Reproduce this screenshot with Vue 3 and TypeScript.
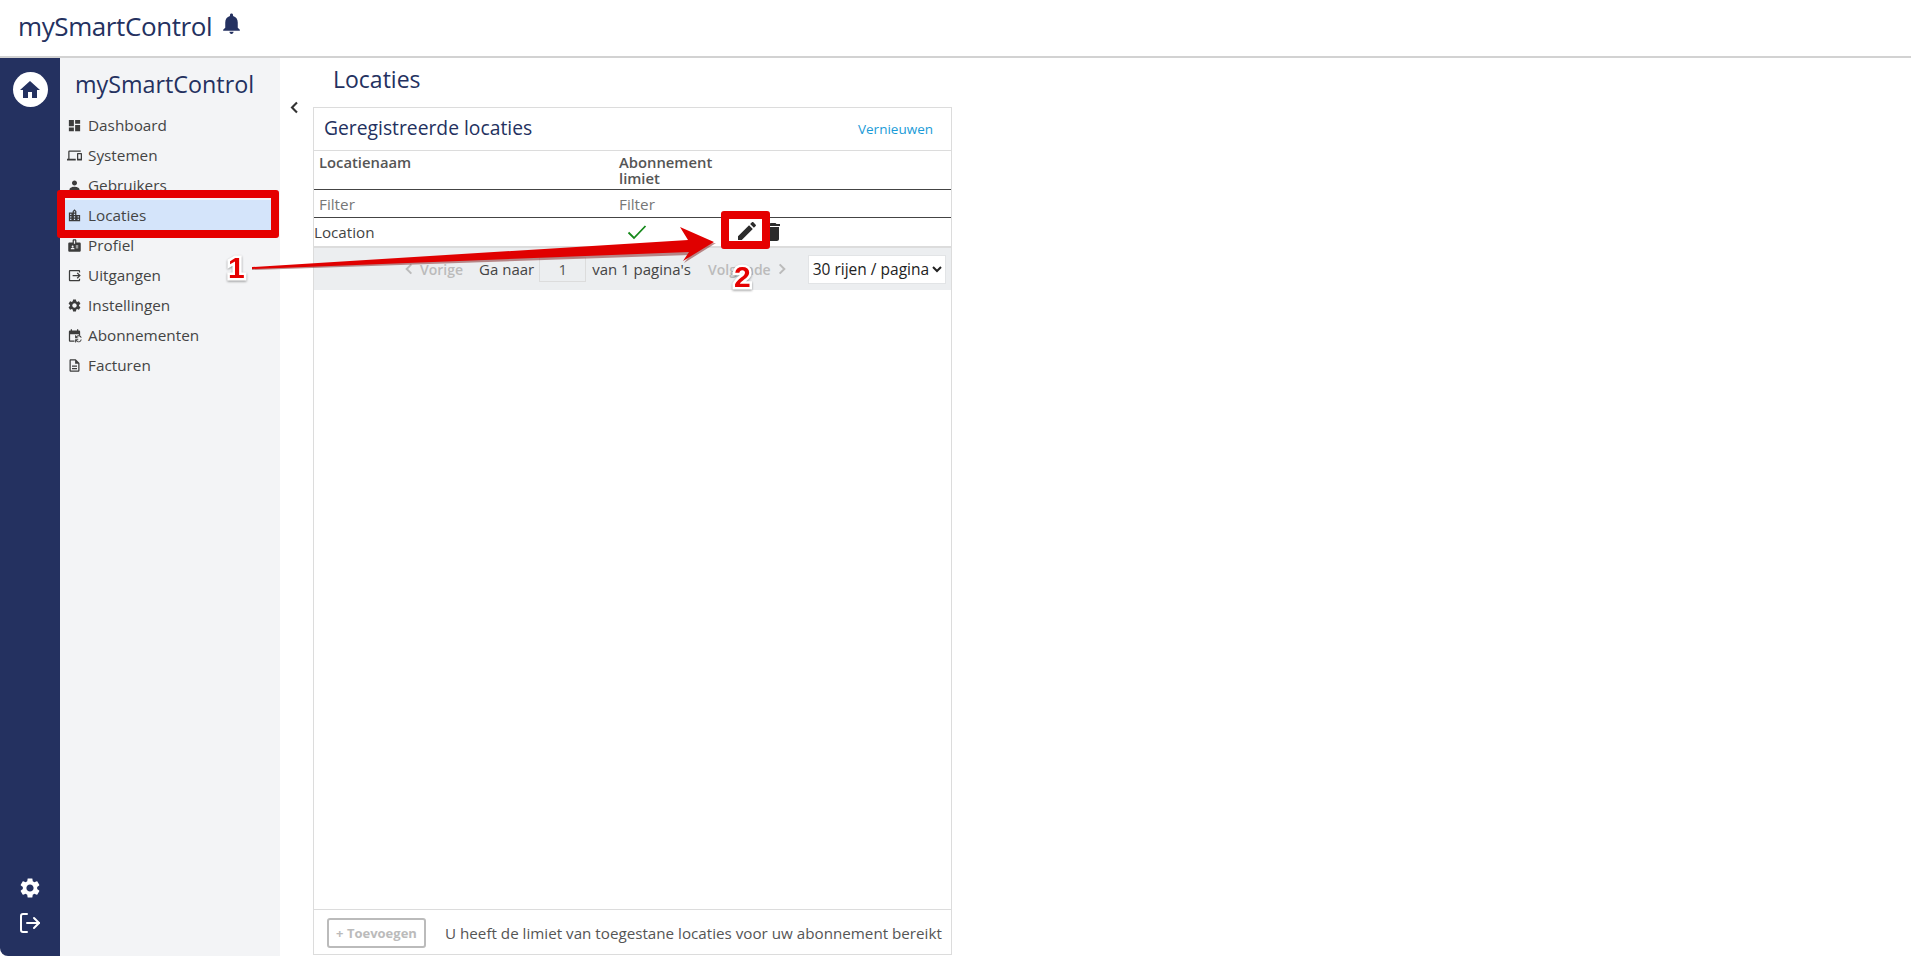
<script setup lang="ts">
interface NavItem {
    label: string
    icon: string
    active?: boolean
}

const navItems: NavItem[] = [
    { label: 'Dashboard', icon: 'M3 13h8V3H3v10zm0 8h8v-6H3v6zm10 0h8V11h-8v10zm0-18v6h8V3h-8z' },
    { label: 'Systemen', icon: 'M4 6h18V4H4c-1.1 0-2 .9-2 2v11H0v3h14v-3H4V6zm19 2h-6c-.55 0-1 .45-1 1v10c0 .55.45 1 1 1h6c.55 0 1-.45 1-1V9c0-.55-.45-1-1-1zm-1 9h-4v-7h4v7z' },
    { label: 'Gebruikers', icon: 'M12 12c2.21 0 4-1.79 4-4s-1.79-4-4-4-4 1.79-4 4 1.79 4 4 4zm0 2c-2.67 0-8 1.34-8 4v2h16v-2c0-2.66-5.33-4-8-4z' },
    { label: 'Locaties', active: true, icon: 'M15 11V5l-3-3-3 3v2H3v14h18V11h-6zm-8 8H5v-2h2v2zm0-4H5v-2h2v2zm0-4H5V9h2v2zm6 8h-2v-2h2v2zm0-4h-2v-2h2v2zm0-4h-2V9h2v2zm0-4h-2V5h2v2zm6 12h-2v-2h2v2zm0-4h-2v-2h2v2z' },
    { label: 'Profiel', icon: 'M20 7h-5V4c0-1.1-.9-2-2-2h-2c-1.1 0-2 .9-2 2v3H4c-1.1 0-2 .9-2 2v11c0 1.1.9 2 2 2h16c1.1 0 2-.9 2-2V9c0-1.1-.9-2-2-2zM9 12c.83 0 1.5.67 1.5 1.5S9.83 15 9 15s-1.5-.67-1.5-1.5S8.17 12 9 12zm3 6H6v-.75c0-1 2-1.5 3-1.5s3 .5 3 1.5V18zm1-9h-2V4h2v5zm5 7.5h-4V15h4v1.5zm0-3h-4V12h4v1.5z' },
    { label: 'Uitgangen', icon: 'M17 17l5-5-5-5-1.41 1.41L18.17 11H9v2h9.17l-2.58 2.59zM19 19H5V5h14v2h2V5c0-1.1-.9-2-2-2H5c-1.1 0-2 .9-2 2v14c0 1.1.9 2 2 2h14c1.1 0 2-.9 2-2v-2h-2v2z' },
    { label: 'Instellingen', icon: 'M19.14 12.94c.04-.3.06-.61.06-.94 0-.32-.02-.64-.07-.94l2.03-1.58c.18-.14.23-.41.12-.61l-1.92-3.32c-.12-.22-.37-.29-.59-.22l-2.39.96c-.5-.38-1.03-.7-1.62-.94l-.36-2.54c-.04-.24-.24-.41-.48-.41h-3.84c-.24 0-.43.17-.47.41l-.36 2.54c-.59.24-1.13.57-1.62.94l-2.39-.96c-.22-.08-.47 0-.59.22L2.74 8.87c-.12.21-.08.47.12.61l2.03 1.58c-.05.3-.09.63-.09.94s.02.64.07.94l-2.03 1.58c-.18.14-.23.41-.12.61l1.92 3.32c.12.22.37.29.59.22l2.39-.96c.5.38 1.03.7 1.62.94l.36 2.54c.05.24.24.41.48.41h3.84c.24 0 .44-.17.47-.41l.36-2.54c.59-.24 1.13-.56 1.62-.94l2.39.96c.22.08.47 0 .59-.22l1.92-3.32c.12-.22.07-.47-.12-.61l-2.01-1.58zM12 15.6c-1.98 0-3.6-1.62-3.6-3.6s1.62-3.6 3.6-3.6 3.6 1.62 3.6 3.6-1.62 3.6-3.6 3.6z' },
    { label: 'Abonnementen', icon: 'M21 12V6c0-1.1-.9-2-2-2h-1V2h-2v2H8V2H6v2H5c-1.1 0-2 .9-2 2v14c0 1.1.9 2 2 2h7v-2H5V10h14v2h2zm-5.36 8a3.5 3.5 0 0 0 6.36-1.5h1.5A5 5 0 0 1 14.5 20.9V23H13v-5h5v1.5h-2.36zM22 15.5a3.5 3.5 0 0 0-6.36-.5H18v1.500h-5V11.500h1.500v2.100A5 5 0 0 1 23.500 15.500H22z' },
    { label: 'Facturen', icon: 'M8 16h8v2H8zm0-4h8v2H8zm6-10H6c-1.1 0-2 .9-2 2v16c0 1.1.89 2 1.99 2H18c1.1 0 2-.9 2-2V8l-6-6zm4 18H6V4h7v5h5v11z' }
]
</script>

<template>
    <div class="page">
        <header class="topbar">
            <span class="brand">mySmartControl</span>
            <svg class="bell" viewBox="0 0 24 24"><path d="M12 22c1.1 0 2-.9 2-2h-4c0 1.1.89 2 2 2zm6-6v-5c0-3.07-1.64-5.64-4.5-6.32V4c0-.83-.67-1.5-1.5-1.5s-1.5.67-1.5 1.5v.68C7.63 5.36 6 7.92 6 11v5l-2 2v1h16v-1l-2-2z" /></svg>
        </header>

        <div class="body">
            <aside class="rail">
                <div class="home">
                    <svg viewBox="0 0 24 24"><path d="M10 20v-6h4v6h5v-8h3L12 3 2 12h3v8z" /></svg>
                </div>
                <div class="rail-bottom">
                    <svg class="rail-gear" viewBox="0 0 24 24"><path :d="navItems[6].icon" /></svg>
                    <svg class="rail-logout" viewBox="0 0 24 24" fill="none" stroke="#fff" stroke-width="2" stroke-linecap="round" stroke-linejoin="round">
                        <path d="M9 21H5a2 2 0 0 1-2-2V5a2 2 0 0 1 2-2h4" />
                        <path d="M16 17l5-5-5-5" />
                        <path d="M21 12H9" />
                    </svg>
                </div>
            </aside>

            <nav class="sidebar">
                <div class="side-title">mySmartControl</div>
                <a v-for="item in navItems" :key="item.label" class="nav-item" :class="{ active: item.active }">
                    <svg viewBox="0 0 24 24"><path :d="item.icon" /></svg>
                    <span>{{ item.label }}</span>
                </a>
            </nav>

            <div class="toggle-col">
                <svg viewBox="0 0 24 24" fill="none" stroke="#333" stroke-width="3"><path d="M15.500 5l-7 7 7 7" /></svg>
            </div>

            <main class="content">
                <h1 class="page-title">Locaties</h1>
                <section class="panel">
                    <div class="panel-head">
                        <h2>Geregistreerde locaties</h2>
                        <a class="refresh">Vernieuwen</a>
                    </div>
                    <div class="row head-row">
                        <div>Locatienaam</div>
                        <div>Abonnement<br />limiet</div>
                    </div>
                    <div class="row filter-row">
                        <div>Filter</div>
                        <div>Filter</div>
                    </div>
                    <div class="row data-row">
                        <div class="loc-name">Location</div>
                        <div class="check-cell">
                            <svg viewBox="0 0 20 16" fill="none" stroke="#15891a" stroke-width="1.800"><path d="M1.500 8.500l5.500 5.500L18.500 2" /></svg>
                        </div>
                        <div class="actions">
                            <svg viewBox="0 0 24 24"><path d="M3 17.250V21h3.750L17.810 9.940l-3.750-3.750L3 17.250zM20.710 7.040c.39-.39.39-1.020 0-1.410l-2.340-2.340c-.39-.39-1.020-.39-1.410 0l-1.830 1.830 3.750 3.750 1.830-1.830z" /></svg>
                            <svg viewBox="0 0 24 24"><path d="M6 19c0 1.100.9 2 2 2h8c1.100 0 2-.9 2-2V7H6v12zM19 4h-3.500l-1-1h-5l-1 1H5v2h14V4z" /></svg>
                        </div>
                    </div>
                    <div class="pager">
                        <span class="pager-off">
                            <svg viewBox="0 0 24 24" fill="none" stroke="#bbb" stroke-width="3"><path d="M15.500 5l-7 7 7 7" /></svg>
                            Vorige
                        </span>
                        <span class="goto">Ga naar</span>
                        <input class="page-input" value="1" />
                        <span class="of">van 1 pagina's</span>
                        <span class="pager-off next">
                            Volgende
                            <svg viewBox="0 0 24 24" fill="none" stroke="#bbb" stroke-width="3"><path d="M8.500 5l7 7-7 7" /></svg>
                        </span>
                        <select class="per-page">
                            <option>30 rijen / pagina</option>
                        </select>
                    </div>
                    <div class="panel-space"></div>
                    <div class="panel-foot">
                        <button class="add-btn" disabled>+ Toevoegen</button>
                        <span>U heeft de limiet van toegestane locaties voor uw abonnement bereikt</span>
                    </div>
                </section>
            </main>
        </div>

        <!-- annotaties over de schermafbeelding -->
        <div class="mark mark-nav"></div>
        <div class="mark mark-edit">
            <svg viewBox="0 0 24 24"><path d="M3 17.250V21h3.750L17.810 9.940l-3.750-3.750L3 17.250zM20.710 7.040c.39-.39.39-1.020 0-1.410l-2.340-2.340c-.39-.39-1.020-.39-1.410 0l-1.830 1.830 3.750 3.750 1.830-1.830z" /></svg>
        </div>
        <svg class="arrow" viewBox="0 0 1911 956">
            <path d="M252 270 L690 255 L684 263 L716 243 L252 268 Z" fill="#8a3030" opacity="0.55" />
            <path d="M252 267 L688 240 L680 227 L714 242 L683 261 L689 252 L252 269 Z" fill="#e00000" />
        </svg>
        <span class="num num-1">1</span>
        <span class="num num-2">2</span>
    </div>
</template>

<style scoped>
.page
{
    position: relative;
    display: flex;
    flex-direction: column;
    height: 956px;
    overflow: hidden;
    background-color: #fff;
    font-family: "Open Sans", "Noto Sans", sans-serif;
    font-size: 15px;
    color: #444;
}

.topbar
{
    display: flex;
    align-items: center;
    gap: 7px;
    height: 56px;
    padding: 0 0 4px 18px;
    box-sizing: border-box;
    flex-shrink: 0;
}

.brand
{
    font-size: 26px;
    letter-spacing: -0.4px;
    color: #243160;
}

.bell
{
    width: 25px;
    height: 25px;
    margin-top: -5px;
    fill: #243160;
}

.body
{
    display: flex;
    flex: 1;
    min-height: 0;
    border-top: 2px solid #d2d2d2;
}

.rail
{
    display: flex;
    flex-direction: column;
    justify-content: space-between;
    align-items: center;
    width: 60px;
    padding: 14px 0 21px;
    box-sizing: border-box;
    background-color: #243160;
    border-bottom-left-radius: 8px;
    flex-shrink: 0;
}

.home
{
    display: flex;
    align-items: center;
    justify-content: center;
    width: 35px;
    height: 35px;
    border-radius: 50%;
    background-color: #fff;
}

.home svg
{
    width: 24px;
    height: 24px;
    fill: #243160;
}

.rail-bottom
{
    display: flex;
    flex-direction: column;
    align-items: center;
    gap: 11px;
}

.rail-gear
{
    width: 24px;
    height: 24px;
    fill: #fff;
}

.rail-logout
{
    width: 24px;
    height: 24px;
}

.sidebar
{
    display: flex;
    flex-direction: column;
    width: 220px;
    padding: 9px 8px 0 5px;
    box-sizing: border-box;
    background-color: #f3f4f6;
    flex-shrink: 0;
}

.side-title
{
    height: 43px;
    padding-left: 10px;
    font-size: 23.300px;
    line-height: 34px;
    color: #243160;
}

.nav-item
{
    display: flex;
    align-items: center;
    gap: 6px;
    height: 30px;
    padding-left: 2px;
    font-size: 15.300px;
    color: #444;
}

.nav-item svg
{
    width: 15px;
    height: 15px;
    fill: #3c3c3c;
    flex-shrink: 0;
}

.nav-item.active
{
    background-color: #d4e4fa;
}

.toggle-col
{
    width: 33px;
    padding-top: 41px;
    box-sizing: border-box;
    flex-shrink: 0;
}

.toggle-col svg
{
    display: block;
    width: 17px;
    height: 17px;
    margin-left: 6px;
}

.content
{
    display: flex;
    flex-direction: column;
    width: 639px;
    padding-bottom: 1px;
    box-sizing: border-box;
}

.page-title
{
    margin: 0 0 0 20px;
    height: 49px;
    font-size: 23px;
    font-weight: 400;
    line-height: 42px;
    color: #243160;
}

.panel
{
    display: flex;
    flex-direction: column;
    flex: 1;
    border: 1px solid #dcdcdc;
}

.panel-head
{
    display: flex;
    justify-content: space-between;
    align-items: center;
    height: 38px;
    padding: 0 18px 4px 10px;
    box-sizing: content-box;
    border-bottom: 1px solid #dcdcdc;
}

.panel-head h2
{
    margin: 0;
    font-size: 19.300px;
    font-weight: 500;
    color: #243160;
}

.refresh
{
    padding-top: 3px;
    font-size: 13.500px;
    font-weight: 500;
    color: #1a9bd7;
}

.row
{
    display: grid;
    grid-template-columns: 300px 1fr;
    padding-left: 5px;
}

.head-row
{
    height: 39px;
    padding-top: 3px;
    box-sizing: border-box;
    font-size: 14.800px;
    font-weight: 600;
    line-height: 16px;
    border-bottom: 1px solid #444;
    color: #555;
}

.filter-row
{
    align-items: center;
    height: 28px;
    box-sizing: border-box;
    border-bottom: 1px solid #444;
    font-size: 15.300px;
    color: #777;
}

.data-row
{
    grid-template-columns: 306px 95px 1fr;
    align-items: center;
    height: 30px;
    box-sizing: border-box;
    padding-left: 0;
    border-bottom: 2px solid #dcdcdc;
}

.loc-name
{
    font-size: 15.200px;
}

.check-cell svg
{
    display: block;
    width: 20px;
    height: 16px;
    margin-left: 7px;
}

.actions
{
    display: flex;
    gap: 1px;
    margin-left: 21px;
}

.actions svg
{
    width: 24px;
    height: 24px;
    fill: #2b2b2b;
}

.pager
{
    display: flex;
    align-items: center;
    height: 42px;
    padding-left: 87px;
    background-color: #eceef0;
}

.pager-off
{
    display: flex;
    align-items: center;
    gap: 3px;
    font-weight: 600;
    font-size: 14px;
    color: #bbb;
}

.pager-off svg
{
    width: 16px;
    height: 16px;
}

.goto
{
    margin-left: 16px;
}

.page-input
{
    width: 47px;
    height: 25px;
    margin-left: 5px;
    padding: 0;
    border: 1px solid #dcdcdc;
    box-sizing: border-box;
    background-color: #eceef0;
    font: inherit;
    color: #555;
    text-align: center;
}

.of
{
    margin-left: 6px;
}

.next
{
    margin-left: 17px;
}

.per-page
{
    width: 138px;
    height: 29px;
    margin-left: 18px;
    padding: 0;
    border: 1px solid #e2e4e6;
    background-color: #fff;
    font: inherit;
    font-size: 15.500px;
    color: #222;
}

.panel-space
{
    flex: 1;
}

.panel-foot
{
    display: flex;
    align-items: center;
    gap: 19px;
    height: 45px;
    padding: 2px 0 0 13px;
    box-sizing: border-box;
    border-top: 1px solid #dcdcdc;
    font-size: 15.200px;
    color: #555;
}

.add-btn
{
    width: 99px;
    height: 30px;
    padding: 0;
    border: 2px solid #bbb;
    border-radius: 3px;
    background-color: #fff;
    font-family: inherit;
    font-size: 13px;
    font-weight: 700;
    color: #bbb;
}

.mark
{
    position: absolute;
    box-sizing: border-box;
    border: 8px solid #e50000;
    border-radius: 3px;
}

.mark-nav
{
    left: 57px;
    top: 190px;
    width: 222px;
    height: 48px;
}

.mark-edit
{
    display: flex;
    align-items: center;
    justify-content: center;
    left: 721px;
    top: 211px;
    width: 49px;
    height: 38px;
    background-color: #fff;
}

.mark-edit svg
{
    width: 24px;
    height: 24px;
    margin: 2px 0 0 2px;
    fill: #2b2b2b;
}

.arrow
{
    position: absolute;
    left: 0;
    top: 0;
    width: 1911px;
    height: 956px;
    pointer-events: none;
}

.num
{
    position: absolute;
    font-family: "Liberation Sans", sans-serif;
    font-size: 30px;
    font-weight: 700;
    line-height: 1;
    color: #e50000;
    -webkit-text-stroke: 5px #fff;
    paint-order: stroke fill;
    filter: drop-shadow(0 1px 1px rgba(0, 0, 0, 0.4));
}

.num-1
{
    left: 228px;
    top: 253px;
}

.num-2
{
    left: 734px;
    top: 262px;
}
</style>

<style>
body
{
    margin: 0;
}
</style>
